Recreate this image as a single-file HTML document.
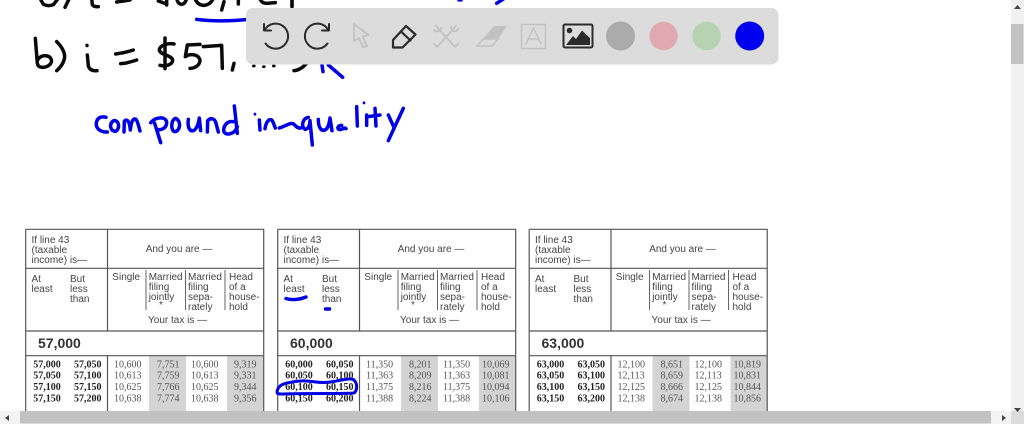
<!DOCTYPE html>
<html><head><meta charset="utf-8"><style>
html,body{margin:0;padding:0;width:1024px;height:424px;overflow:hidden;background:#fff}
svg{position:absolute;left:0;top:0;filter:blur(.35px)}
.h{font:10px "Liberation Sans",sans-serif;fill:#444}
.big{font:bold 14px "Liberation Sans",sans-serif;fill:#333}
.b{font:bold 10px "Liberation Serif",serif;fill:#222}
.n{font:10px "Liberation Serif",serif;fill:#555}
.ink{fill:none;stroke-linecap:round;stroke-linejoin:round;stroke-width:10.500}
</style></head><body>
<svg width="1024" height="424" viewBox="0 0 1024 424" xmlns="http://www.w3.org/2000/svg">
<defs>
<g id="frame">
<rect x="149" y="356" width="37" height="55" fill="#d4d4d4"/>
<rect x="227" y="356" width="36.500" height="55" fill="#d4d4d4"/>
<path d="M25.700 229.300H263.700V411M25.700 229.300V411M25.700 268.300H263.700M25.700 331H263.700M25.700 355.700H263.700M107.500 229.300V331M107.500 355.700V411" fill="none" stroke="#555" stroke-width="1.200"/>
<path d="M146 270V310M185.500 270V310M225 270V310" fill="none" stroke="#666" stroke-width="1"/>
</g>
</defs>

<!-- table 1 -->
<g>
<use href="#frame"/>
<text class="h" x="31.500" y="243">If line 43</text><text class="h" x="31.500" y="253">(taxable</text><text class="h" x="31.500" y="263">income) is—</text>
<text class="h" x="145.700" y="252">And you are —</text>
<text class="h" x="31.500" y="282">At</text><text class="h" x="31.500" y="292">least</text>
<text class="h" x="70" y="282">But</text><text class="h" x="70" y="292">less</text><text class="h" x="70" y="302">than</text>
<text class="h" x="112.300" y="280">Single</text>
<text class="h" x="148.700" y="280">Married</text><text class="h" x="148.700" y="290">filing</text><text class="h" x="148.700" y="300">jointly</text><text class="h" x="159" y="308">*</text>
<text class="h" x="188" y="280">Married</text><text class="h" x="188" y="290">filing</text><text class="h" x="188" y="300">sepa-</text><text class="h" x="188" y="310">rately</text>
<text class="h" x="229" y="280">Head</text><text class="h" x="229" y="290">of a</text><text class="h" x="229" y="300">house-</text><text class="h" x="229" y="310">hold</text>
<text class="h" x="148" y="323">Your tax is —</text>
<text class="big" x="38" y="348">57,000</text>
<text class="b" x="33.300" y="367.300">57,000</text><text class="b" x="74" y="367.300">57,050</text><text class="n" x="114" y="367.300">10,600</text><text class="n" x="157" y="367.300">7,751</text><text class="n" x="191" y="367.300">10,600</text><text class="n" x="234" y="367.300">9,319</text>
<text class="b" x="33.300" y="378.700">57,050</text><text class="b" x="74" y="378.700">57,100</text><text class="n" x="114" y="378.700">10,613</text><text class="n" x="157" y="378.700">7,759</text><text class="n" x="191" y="378.700">10,613</text><text class="n" x="234" y="378.700">9,331</text>
<text class="b" x="33.300" y="390">57,100</text><text class="b" x="74" y="390">57,150</text><text class="n" x="114" y="390">10,625</text><text class="n" x="157" y="390">7,766</text><text class="n" x="191" y="390">10,625</text><text class="n" x="234" y="390">9,344</text>
<text class="b" x="33.300" y="401.300">57,150</text><text class="b" x="74" y="401.300">57,200</text><text class="n" x="114" y="401.300">10,638</text><text class="n" x="157" y="401.300">7,774</text><text class="n" x="191" y="401.300">10,638</text><text class="n" x="234" y="401.300">9,356</text>
</g>

<!-- table 2 -->
<g transform="translate(252,0)">
<use href="#frame"/>
<text class="h" x="31.500" y="243">If line 43</text><text class="h" x="31.500" y="253">(taxable</text><text class="h" x="31.500" y="263">income) is—</text>
<text class="h" x="145.700" y="252">And you are —</text>
<text class="h" x="31.500" y="282">At</text><text class="h" x="31.500" y="292">least</text>
<text class="h" x="70" y="282">But</text><text class="h" x="70" y="292">less</text><text class="h" x="70" y="302">than</text>
<text class="h" x="112.300" y="280">Single</text>
<text class="h" x="148.700" y="280">Married</text><text class="h" x="148.700" y="290">filing</text><text class="h" x="148.700" y="300">jointly</text><text class="h" x="159" y="308">*</text>
<text class="h" x="188" y="280">Married</text><text class="h" x="188" y="290">filing</text><text class="h" x="188" y="300">sepa-</text><text class="h" x="188" y="310">rately</text>
<text class="h" x="229" y="280">Head</text><text class="h" x="229" y="290">of a</text><text class="h" x="229" y="300">house-</text><text class="h" x="229" y="310">hold</text>
<text class="h" x="148" y="323">Your tax is —</text>
<text class="big" x="38" y="348">60,000</text>
<text class="b" x="33.300" y="367.300">60,000</text><text class="b" x="74" y="367.300">60,050</text><text class="n" x="114" y="367.300">11,350</text><text class="n" x="157" y="367.300">8,201</text><text class="n" x="191" y="367.300">11,350</text><text class="n" x="230" y="367.300">10,069</text>
<text class="b" x="33.300" y="378.700">60,050</text><text class="b" x="74" y="378.700">60,100</text><text class="n" x="114" y="378.700">11,363</text><text class="n" x="157" y="378.700">8,209</text><text class="n" x="191" y="378.700">11,363</text><text class="n" x="230" y="378.700">10,081</text>
<text class="b" x="33.300" y="390">60,100</text><text class="b" x="74" y="390">60,150</text><text class="n" x="114" y="390">11,375</text><text class="n" x="157" y="390">8,216</text><text class="n" x="191" y="390">11,375</text><text class="n" x="230" y="390">10,094</text>
<text class="b" x="33.300" y="401.300">60,150</text><text class="b" x="74" y="401.300">60,200</text><text class="n" x="114" y="401.300">11,388</text><text class="n" x="157" y="401.300">8,224</text><text class="n" x="191" y="401.300">11,388</text><text class="n" x="230" y="401.300">10,106</text>
</g>

<!-- table 3 -->
<g transform="translate(503.500,0)">
<use href="#frame"/>
<text class="h" x="31.500" y="243">If line 43</text><text class="h" x="31.500" y="253">(taxable</text><text class="h" x="31.500" y="263">income) is—</text>
<text class="h" x="145.700" y="252">And you are —</text>
<text class="h" x="31.500" y="282">At</text><text class="h" x="31.500" y="292">least</text>
<text class="h" x="70" y="282">But</text><text class="h" x="70" y="292">less</text><text class="h" x="70" y="302">than</text>
<text class="h" x="112.300" y="280">Single</text>
<text class="h" x="148.700" y="280">Married</text><text class="h" x="148.700" y="290">filing</text><text class="h" x="148.700" y="300">jointly</text><text class="h" x="159" y="308">*</text>
<text class="h" x="188" y="280">Married</text><text class="h" x="188" y="290">filing</text><text class="h" x="188" y="300">sepa-</text><text class="h" x="188" y="310">rately</text>
<text class="h" x="229" y="280">Head</text><text class="h" x="229" y="290">of a</text><text class="h" x="229" y="300">house-</text><text class="h" x="229" y="310">hold</text>
<text class="h" x="148" y="323">Your tax is —</text>
<text class="big" x="38" y="348">63,000</text>
<text class="b" x="33.300" y="367.300">63,000</text><text class="b" x="74" y="367.300">63,050</text><text class="n" x="114" y="367.300">12,100</text><text class="n" x="157" y="367.300">8,651</text><text class="n" x="191" y="367.300">12,100</text><text class="n" x="230" y="367.300">10,819</text>
<text class="b" x="33.300" y="378.700">63,050</text><text class="b" x="74" y="378.700">63,100</text><text class="n" x="114" y="378.700">12,113</text><text class="n" x="157" y="378.700">8,659</text><text class="n" x="191" y="378.700">12,113</text><text class="n" x="230" y="378.700">10,831</text>
<text class="b" x="33.300" y="390">63,100</text><text class="b" x="74" y="390">63,150</text><text class="n" x="114" y="390">12,125</text><text class="n" x="157" y="390">8,666</text><text class="n" x="191" y="390">12,125</text><text class="n" x="230" y="390">10,844</text>
<text class="b" x="33.300" y="401.300">63,150</text><text class="b" x="74" y="401.300">63,200</text><text class="n" x="114" y="401.300">12,138</text><text class="n" x="157" y="401.300">8,674</text><text class="n" x="191" y="401.300">12,138</text><text class="n" x="230" y="401.300">10,856</text>
</g>

<!-- table annotations -->
<path d="M277 392C278 385 282 383 300 381C312 380 318 384 330 382C340 381 350 377 354 380C358 384 357 391 354 393C340 394 320 393 283 394C279 394 277 394 277 392Z" fill="none" stroke="#0000e6" stroke-width="3" stroke-linejoin="round"/>
<path d="M286 298.500C292 300.500 300 299.500 306 297" fill="none" stroke="#0000e6" stroke-width="3.400" stroke-linecap="round"/>
<path d="M325.500 309H329.500" fill="none" stroke="#0000e6" stroke-width="3.400" stroke-linecap="round"/>

<!-- handwriting -->
<g transform="scale(.33333)">
<g class="ink" stroke="#0a0a0a">
<path d="M120 -5L130 13Q145 20 160 14L175 -5"/>
<path d="M195 22L208 -5"/>
<path d="M275 -5L277 14Q281 21 295 20"/>
<path d="M350 6L390 0"/>
<path d="M475 3L500 12M500 -5V15"/>
<path d="M530 -5Q533 12 545 13Q556 12 560 -5"/>
<path d="M585 -5Q592 16 612 16Q632 14 640 -5"/>
<path d="M672 5L665 30"/>
<path d="M715 -5V12"/>
<path d="M780 -3Q785 10 800 10L826 8" />
<path d="M876 -5V20" stroke-width="11"/>
<path d="M106 115L112 190C114 205 135 205 148 195C160 185 155 168 135 167C125 167 118 172 113 180"/>
<path d="M170 125C190 145 198 165 192 180C188 195 178 205 170 212"/>
<path d="M261 136V137" stroke-width="10"/>
<path d="M262 165L265 198Q270 214 291 212"/>
<path d="M347 162C365 160 385 155 400 150"/>
<path d="M362 191C380 190 395 185 410 180"/>
<path d="M522 132C500 128 478 138 478 150C480 165 515 165 518 180C518 195 495 200 480 196"/>
<path d="M495 114L495 206"/>
<path d="M600 133L562 135L556 170C570 160 595 162 600 180C600 196 585 205 570 205"/>
<path d="M610 140L665 136L667 205"/>
<path d="M702 190L697 210"/>
<path d="M760 198H763M790 200H793M820 198H823" stroke-width="8"/>
<path d="M882 212C900 210 910 200 920 190"/>
</g>
<g class="ink" stroke="#0000e6">
<path d="M590 58Q660 67 745 58"/>
<path d="M1375 2H1385" stroke-width="6"/>
<path d="M1490 10L1510 -3"/>
<path d="M966 195L969 215"/>
<path d="M985 195L1028 232"/>
<path d="M318 352C305 348 292 352 289 368C287 385 300 397 322 396"/>
<path d="M338 364C328 372 330 392 345 394C358 392 360 366 346 362C342 361 340 362 338 364Z"/>
<path d="M372 396L373 364C380 356 388 360 391 390C394 362 400 354 408 358C414 365 416 380 420 393"/>
<path d="M464 370L482 428"/>
<path d="M452 368C470 348 500 350 500 368C500 385 482 392 472 388"/>
<path d="M526 355C512 362 512 392 524 395C540 395 546 362 526 355Z"/>
<path d="M565 358C562 380 568 395 580 392C590 388 596 370 598 354L602 392"/>
<path d="M622 396L623 362C632 352 645 355 648 370L655 396"/>
<path d="M700 365C680 362 668 380 672 396C680 408 705 402 712 380"/>
<path d="M703 318L712 400"/>
<path d="M765 342V343" stroke-width="8"/>
<path d="M778 360L780 390"/>
<path d="M795 386C798 368 805 355 815 360C820 365 822 375 826 384"/>
<path d="M838 384C860 378 875 362 885 376C892 384 900 386 908 382"/>
<path d="M925 352C908 355 902 378 915 388C925 388 930 375 930 362L937 435"/>
<path d="M955 358C955 380 962 395 975 390C985 385 988 370 990 354L996 392"/>
<path d="M1025 376C1012 376 1010 388 1020 389C1030 388 1034 380 1038 386"/>
<path d="M1070 320L1072 378"/>
<path d="M1092 308V309" stroke-width="8"/>
<path d="M1100 345L1100 376"/>
<path d="M1125 325L1128 378"/>
<path d="M1105 350L1140 345"/>
<path d="M1165 345L1182 382"/>
<path d="M1210 325L1165 422"/>
</g>
</g>

<!-- toolbar -->
<rect x="246" y="8" width="532.500" height="56.500" rx="7" fill="#dcdcdc"/>
<g fill="none" stroke="#2b2b2b" stroke-width="2" stroke-linecap="round" stroke-linejoin="round">
<path d="M265 29.500A12.500 12.500 0 1 1 265.500 43.500"/>
<path d="M264 24V30.500H271"/>
<path d="M328 29.500A12.500 12.500 0 1 0 327.500 43.500"/>
<path d="M329 24V30.500H322"/>
<path d="M393 47.500V40L406 26L415.500 34.500L402.500 47.500ZM401 31.500L410.500 40.500" stroke-width="2.200"/>
</g>
<g fill="none" stroke="#c2c2c2" stroke-width="1.800" stroke-linejoin="round" stroke-linecap="round">
<path d="M354 24L368.500 35L362.500 36.500L367 46L363 47.500L359 38L354 41Z"/>
<path d="M436 26L454 46M456 26L438 46M434 30C436 33 441 31 441 28M458 29C456 33 451 31 451 27M437 47L434 44M455 47L458 44"/>
<path d="M477 46L483 39H498L492 46Z" stroke-width="1.500"/>
<rect x="521.500" y="24.500" width="24" height="24" stroke-width="1.500"/>
<path d="M526 44L533.500 28L541 44M528.500 39H538.500" stroke-width="1.300"/>
</g>
<path d="M483 39L494 26H507L498 39Z" fill="#c2c2c2"/>
<rect x="563.500" y="24.500" width="29" height="23" rx="1.500" fill="#dcdcdc" stroke="#2b2b2b" stroke-width="2"/>
<circle cx="569.500" cy="30.500" r="2.800" fill="#2b2b2b"/>
<path d="M566 45L573 36L576 39L582 30.500L590 38V45Z" fill="#2b2b2b"/>
<circle cx="620.500" cy="36" r="14.500" fill="#ababab"/>
<circle cx="663.500" cy="36" r="14.200" fill="#e0a9b1"/>
<circle cx="706.500" cy="36" r="14.200" fill="#b6d2b1"/>
<circle cx="749.700" cy="36" r="14.500" fill="#0000ee"/>

<!-- scrollbars -->
<rect x="0" y="411" width="1024" height="13" fill="#f3f3f3"/>
<rect x="20" y="411" width="971" height="12.500" fill="#c2c2c2"/>
<rect x="1011" y="0" width="13" height="424" fill="#f1f1f1"/>
<rect x="1011" y="24" width="12.500" height="40" fill="#c2c2c2"/>
<rect x="1011" y="411" width="13" height="13" fill="#dcdcdc"/>
<path d="M9 415V421L5 418ZM1002 415V421L1006 418ZM1014 9H1021L1017.500 5ZM1014 408H1021L1017.500 412Z" fill="#444"/>
</svg>
</body></html>
